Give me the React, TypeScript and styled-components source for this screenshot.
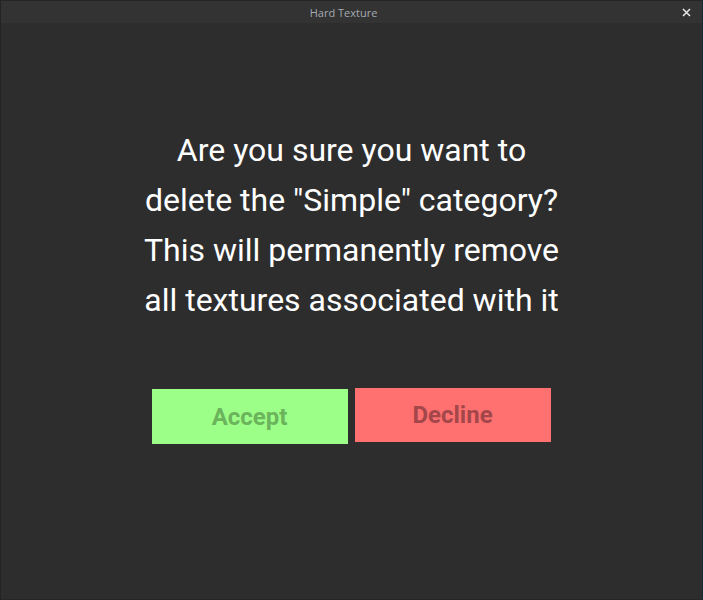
import styled, { createGlobalStyle } from 'styled-components';

const GlobalStyle = createGlobalStyle`
  html, body {
    margin: 0;
    padding: 0;
    background: #2d2d2d;
  }
  #root {
    height: 600px;
  }
`;

const Window = styled.div`
  box-sizing: border-box;
  width: 703px;
  height: 600px;
  display: flex;
  flex-direction: column;
  background: #2d2d2d;
  border-left: 1px solid #232323;
  border-right: 1px solid #1b2838;
  border-bottom: 1px solid #262626;
  font-family: Roboto, 'Liberation Sans', sans-serif;
`;

const TitleBar = styled.header`
  box-sizing: border-box;
  height: 23px;
  flex: none;
  display: flex;
  align-items: center;
  justify-content: center;
  position: relative;
  background: #333333;
  border-top: 1px solid #252525;
`;

const Title = styled.span`
  font-family: 'Open Sans', 'Liberation Sans', sans-serif;
  font-size: 11px;
  color: #a3aab2;
  transform: translateX(-8px);
`;

const CloseBtn = styled.button`
  position: absolute;
  right: 9px;
  top: 4px;
  width: 14px;
  height: 14px;
  padding: 0;
  border: 0;
  background: transparent;
  display: flex;
  align-items: center;
  justify-content: center;
  cursor: pointer;
`;

const Body = styled.main`
  flex: 1;
  display: flex;
  flex-direction: column;
  align-items: center;
  padding-top: 102px;
`;

const Message = styled.p`
  margin: 0;
  width: 520px;
  text-align: center;
  color: #ffffff;
  font-size: 32px;
  line-height: 50px;
  font-weight: 400;
`;

const Actions = styled.div`
  display: flex;
  align-items: flex-start;
  gap: 7px;
  margin-top: 63px;
  margin-right: 1px;
`;

const ActionBtn = styled.button<{ $bg: string; $fg: string; $drop?: number }>`
  width: 196px;
  height: ${(p) => (p.$drop ? 55 : 54)}px;
  margin-top: ${(p) => p.$drop ?? 0}px;
  border: 0;
  padding: 0;
  background: ${(p) => p.$bg};
  color: ${(p) => p.$fg};
  font-family: Roboto, 'Liberation Sans', sans-serif;
  font-weight: 700;
  font-size: 24px;
  cursor: pointer;
`;

const App = () => {
  return (
    <>
      <GlobalStyle />
      <Window>
        <TitleBar>
          <Title>Hard Texture</Title>
          <CloseBtn aria-label="Close">
            <svg width="9" height="9" viewBox="0 0 9 9">
              <path d="M1 1 L8 8 M8 1 L1 8" stroke="#e8e8e8" strokeWidth="1.5" />
            </svg>
          </CloseBtn>
        </TitleBar>
        <Body>
          <Message>
            Are you sure you want to
            <br />
            delete the "Simple" category?
            <br />
            This will permanently remove
            <br />
            all textures associated with it
          </Message>
          <Actions>
            <ActionBtn $bg="#9cff88" $fg="#6bb45b" $drop={1}>
              Accept
            </ActionBtn>
            <ActionBtn $bg="#ff7070" $fg="#a3474a">
              Decline
            </ActionBtn>
          </Actions>
        </Body>
      </Window>
    </>
  );
};

export default App;
